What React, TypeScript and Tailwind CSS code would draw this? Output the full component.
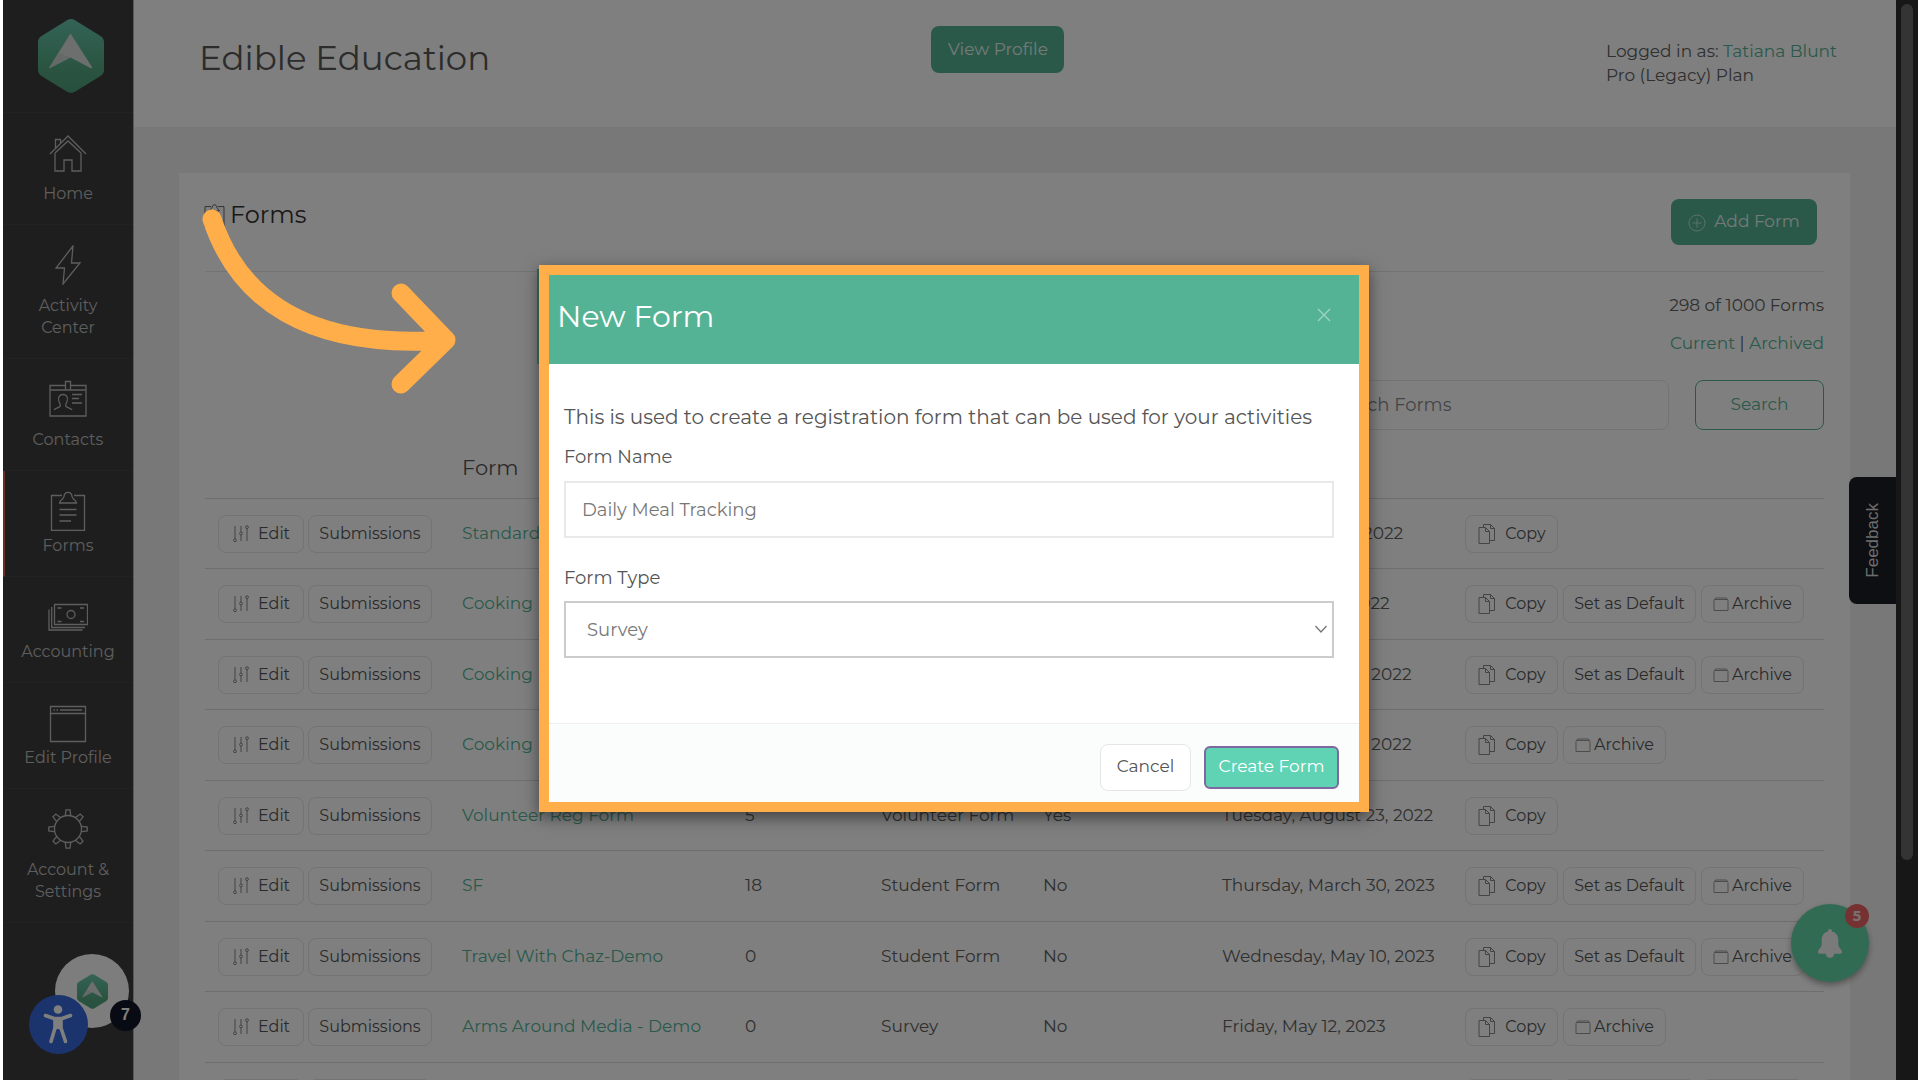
import React from 'react';

type IconProps = { className?: string };

function Svg({ className, children, box = 40, stroke = 1.3 }: IconProps & { children: React.ReactNode; box?: number; stroke?: number }) {
  return (
    <svg className={className} viewBox={`0 0 ${box} ${box}`} fill="none" stroke="currentColor" strokeWidth={stroke} aria-hidden="true">
      {children}
    </svg>
  );
}

const HomeIcon = ({ className }: IconProps) => (
  <Svg className={className}>
    <path d="M2 21 20 3l18 18M7 20v18h9V27h8v11h9V20M7 20 20 8l13 12M7.500 15.500V6.500h5v4" />
  </Svg>
);
const BoltIcon = ({ className }: IconProps) => (
  <Svg className={className}>
    <path d="M25 1 8 23h8.500L15 39l17-21h-8.500z" />
  </Svg>
);
const ContactIcon = ({ className }: IconProps) => (
  <Svg className={className}>
    <path d="M17.500 6.500H2v30.500h36V6.500H22.500M2 11h15.500M22.500 11H38M17.500 2.500h5V11h-5zM24 15.500h10M24 19.500h7M24 24h10M6 31c1-2 4-2 6-3.500.8-1 0-3-1-5-1.500-5 1-7 4-7s5.500 2 4 7c-1 2-1.800 4-1 5 2 1.500 5 1.500 6 3.500" />
  </Svg>
);
const FormsIcon = ({ className }: IconProps) => (
  <Svg className={className}>
    <path d="M14 4.500H3.500V39.500h33V4.500H26M11.500 12h17c-.5-3.500-4-3.500-4.500-6.500-.4-5.500-7.600-5.500-8 0-.5 3-4 3-4.500 6.500zM11.500 18.500h17M11.500 24h17M11.500 30h11.500" />
  </Svg>
);
const CashIcon = ({ className }: IconProps) => (
  <Svg className={className}>
    <path d="M6.500 7.500h33v20h-33zM3.700 10v20.500H37M1 12.500V33h33.500M9.500 11h4M32 11h4M9.500 24.500h4M32 24.500h4" />
    <circle cx="23" cy="17.500" r="4" />
  </Svg>
);
const WindowIcon = ({ className }: IconProps) => (
  <Svg className={className}>
    <path d="M2.500 3.500h35v35h-35zM2.500 10.500h35M12 7h22M5.500 7h1.500M8.500 7H10" />
  </Svg>
);
const GearIcon = ({ className }: IconProps) => (
  <Svg className={className}>
    <circle cx="20" cy="20" r="13.500" />
    {[0, 45, 90, 135, 180, 225, 270, 315].map((a) => (
      <path key={a} d="M17.300 6.500 18 .8h4l.7 5.700" transform={`rotate(${a} 20 20)`} />
    ))}
  </Svg>
);
const SlidersIcon = ({ className }: IconProps) => (
  <Svg className={className} box={18} stroke={1}>
    <path d="M3 1v13M9 1v6M9 10v6M15 4v12" />
    <circle cx="3" cy="15.300" r="1.400" />
    <circle cx="9" cy="8.500" r="1.400" />
    <circle cx="15" cy="2.200" r="1.400" />
  </Svg>
);
const CopyIcon = ({ className }: IconProps) => (
  <Svg className={className} box={20} stroke={1}>
    <path d="M2 3.500h6.500l4 4V19.500H2zM8.500 3.500v4h4M6.500 3.500v-3H13.500l4 4V16.500h-5M13.500.5v4h4" />
  </Svg>
);
const ArchiveIcon = ({ className }: IconProps) => (
  <Svg className={className} box={16} stroke={1}>
    <path d="M1 4.500V14.500h14V4.500" />
    <path d="M1 4.500 2.500 2h11L15 4.500M2 3.500h12" />
  </Svg>
);

function Logo({ className }: IconProps) {
  return (
    <svg className={className} viewBox="0 0 66 74" aria-hidden="true">
      <defs>
        <linearGradient id="hex" x1="0" y1="0" x2="0" y2="1">
          <stop offset="0" stopColor="#68c6ad" />
          <stop offset=".45" stopColor="#5ab390" />
          <stop offset=".7" stopColor="#54a881" />
          <stop offset="1" stopColor="#4f9f7c" />
        </linearGradient>
      </defs>
      <path fill="url(#hex)" d="M29 1.200Q33-1 37 1.200L62.500 17Q66 19.500 66 23V51Q66 54.500 62.500 57L37 72.800Q33 75 29 72.800L3.500 57Q0 54.500 0 51V23Q0 19.500 3.500 17z" />
      <path fill="#d9dedd" d="M32.500 14.500 54 48Q55 50 52.500 49L32.500 38.500 12 49Q10.500 50 11.500 48z" />
      <path fill="#c2cac8" d="M32.500 38.500 12 49Q10.500 50 11.500 48L21 34z" opacity=".6" />
    </svg>
  );
}

const nav = [
  { label: 'Home', icon: HomeIcon, tall: true },
  { label: 'Activity Center', icon: BoltIcon, tall: true },
  { label: 'Contacts', icon: ContactIcon, tall: true },
  { label: 'Forms', icon: FormsIcon, active: true },
  { label: 'Accounting', icon: CashIcon },
  { label: 'Edit Profile', icon: WindowIcon },
  { label: 'Account & Settings', icon: GearIcon, tall: true },
];

type Row = { form: string; count?: string; type?: string; flag?: string; date: string; actions: string[] };
const rows: Row[] = [
  { form: 'Standard', date: 'Monday, June 6, 2022', actions: ['copy'] },
  { form: 'Cooking', date: 'Friday, April 15, 2022', actions: ['copy', 'default', 'archive'] },
  { form: 'Cooking', date: 'Tuesday, June 14, 2022', actions: ['copy', 'default', 'archive'] },
  { form: 'Cooking', date: 'Tuesday, June 14, 2022', actions: ['copy', 'archive'] },
  { form: 'Volunteer Reg Form', count: '5', type: 'Volunteer Form', flag: 'Yes', date: 'Tuesday, August 23, 2022', actions: ['copy'] },
  { form: 'SF', count: '18', type: 'Student Form', flag: 'No', date: 'Thursday, March 30, 2023', actions: ['copy', 'default', 'archive'] },
  { form: 'Travel With Chaz-Demo', count: '0', type: 'Student Form', flag: 'No', date: 'Wednesday, May 10, 2023', actions: ['copy', 'default', 'archive'] },
  { form: 'Arms Around Media - Demo', count: '0', type: 'Survey', flag: 'No', date: 'Friday, May 12, 2023', actions: ['copy', 'archive'] },
  { form: '', date: '', actions: ['copy', 'default', 'archive'] },
];

const small = 'flex h-[38px] shrink-0 items-center justify-center rounded-lg border border-[#e6e6e6] bg-white text-base text-[#555] whitespace-nowrap';

function Actions({ list }: { list: string[] }) {
  return (
    <div className="flex gap-[5px]">
      {list.includes('copy') && (
        <button className={`${small} w-[93px] gap-2`}>
          <CopyIcon className="size-5 text-[#888]" />
          Copy
        </button>
      )}
      {list.includes('default') && <button className={`${small} w-[133px]`}>Set as Default</button>}
      {list.includes('archive') && (
        <button className={`${small} w-[103px] gap-[3px]`}>
          <ArchiveIcon className="size-4 text-[#999]" />
          Archive
        </button>
      )}
    </div>
  );
}

function Sidebar() {
  return (
    <nav className="w-[131px] shrink-0 border-r border-[#b0b0b0] bg-[#3c3c3c] text-[#bcbcbc]">
      <a href="#dashboard" aria-label="Dashboard" className="flex h-[113px] justify-center border-b border-[#444] pt-[19px] pl-1.5">
        <Logo className="h-[74px] w-[66px]" />
      </a>
      {nav.map(({ label, icon: Icon, tall, active }) => (
        <a
          key={label}
          href={`#${label}`}
          className={`flex flex-col items-center border-b border-b-[#444] pt-5 pb-[19px] text-center text-base leading-[22px] ${tall ? 'gap-2.5' : 'gap-1'} ${active ? 'border-l-2 border-l-[#d65a4c] pr-0.5' : ''}`}
        >
          <Icon className="size-10" />
          <span className={label.length > 12 ? 'w-24' : 'whitespace-nowrap'}>{label}</span>
        </a>
      ))}
    </nav>
  );
}

function Header() {
  return (
    <header className="flex h-[127px] shrink-0 items-start bg-white pr-[59px] pl-[65px]">
      <h1 className="flex-[732] pt-[34px] text-[34px] leading-[48px] text-[#585858]">Edible Education</h1>
      <button className="mt-[26px] h-[47px] w-[133px] rounded-lg bg-[#54b394] text-[17px] text-[#e8f4ef]">View Profile</button>
      <div className="flex flex-[772] justify-end pt-[39px] text-[17px] leading-6 text-[#606060]">
        <p className="w-[231px] whitespace-nowrap">
          Logged in as: <a href="#me" className="text-[#54b394]">Tatiana Blunt</a>
          <br />
          Pro (Legacy) Plan
        </p>
      </div>
    </header>
  );
}

function FormsCard() {
  return (
    <section className="min-h-full bg-white px-[26px] text-[#606060]">
      <div className="flex h-[99px] items-start justify-between border-b border-[#e6e6e6] pt-[26px] pr-[7px]">
        <h2 className="flex items-center gap-1 text-2xl leading-8 text-[#333]">
          <FormsIcon className="-ml-0.5 size-[23px]" />
          Forms
        </h2>
        <button className="flex h-[46px] w-[146px] items-center justify-center gap-2 rounded-lg bg-[#54b394] text-[17px] text-[#e8f4ef]">
          <Svg className="mt-0.5 size-[18px] text-[#b8dfd2]" box={18} stroke={1}>
            <circle cx="9" cy="9" r="8" />
            <path d="M9 4.500v9M4.500 9h9" />
          </Svg>
          Add Form
        </button>
      </div>
      <div className="flex flex-col items-end pt-5 text-[17px]">
        <p className="leading-[26px]">298 of 1000 Forms</p>
        <p className="mt-3 leading-[26px]">
          <a href="#current" className="text-[#54b394]">Current</a> | <a href="#archived" className="text-[#54b394]">Archived</a>
        </p>
        <form className="mt-6 flex gap-[26px]" onSubmit={(e) => e.preventDefault()}>
          <input aria-label="Search Forms" placeholder="Search Forms" className="h-[50px] w-[360px] rounded-lg border border-[#e6e6e6] px-[18px] text-lg placeholder:text-[#8a8a8a]" />
          <button className="h-[50px] w-[129px] rounded-lg border border-[#54b394] text-[17px] text-[#54b394]">Search</button>
        </form>
      </div>
      <table className="mt-[18px] w-full table-fixed text-left text-[17px] whitespace-nowrap">
        <colgroup>
          <col className="w-[244px]" />
          <col className="w-[283px]" />
          <col className="w-[136px]" />
          <col className="w-[162px]" />
          <col className="w-[179px]" />
          <col className="w-[244px]" />
          <col />
        </colgroup>
        <thead>
          <tr className="h-[50px] text-[21px] text-[#555]">
            <td />
            <th scope="col" className="pb-3.5 pl-[13px] align-bottom font-normal">Form</th>
            <td colSpan={5} />
          </tr>
        </thead>
        <tbody>
          {rows.map((r, i) => (
            <tr key={i} className="h-[70px] border-t border-[#dcdcdc] even:h-[71px]">
              <td className="pt-px pl-[13px]">
                <div className="flex gap-1">
                  <button className={`${small} w-[86px] gap-2`}>
                    <SlidersIcon className="size-[18px] text-[#888]" />
                    Edit
                  </button>
                  <button className={`${small} w-[124px]`}>Submissions</button>
                </div>
              </td>
              <td className="pt-px pl-[13px]"><a href="#form" className="text-[#54b394]">{r.form}</a></td>
              <td className="pt-px pl-[13px]">{r.count}</td>
              <td className="pt-px pl-[13px]">{r.type}</td>
              <td className="pt-px pl-[13px]">{r.flag}</td>
              <td className="pt-px pl-[13px]">{r.date}</td>
              <td className="pt-px pl-3"><Actions list={r.actions} /></td>
            </tr>
          ))}
        </tbody>
      </table>
    </section>
  );
}

function Widgets() {
  return (
    <>
      <button className="absolute top-[477px] right-[22px] flex h-[127px] w-[47px] items-center justify-center rounded-l-lg bg-[#1b1f24] text-white">
        <span className="rotate-180 font-['Liberation_Sans'] text-[17px] leading-5 text-[#dcdcdc] [writing-mode:vertical-rl]">Feedback</span>
      </button>
      <button aria-label="Notifications" className="absolute right-[49px] bottom-[98px] flex size-[78px] items-center justify-center rounded-full bg-[#64d6a9] shadow-[0_3px_6px_rgba(0,0,0,0.35)]">
        <svg className="size-[30px] text-[#f5f5f5]" viewBox="0 0 30 30" fill="currentColor" aria-hidden="true">
          <path d="M15 1a2 2 0 0 1 2 2v.6c4 .9 6.300 4.200 6.300 8.400v4.500c0 3 3.700 5 3.700 7.500 0 1.200-.8 1.800-2 1.800H19a4 4 0 0 1-8 0H5c-1.200 0-2-.6-2-1.800 0-2.500 3.700-4.500 3.700-7.500V12c0-4.200 2.300-7.500 6.300-8.400V3a2 2 0 0 1 2-2z" />
        </svg>
        <span className="absolute top-0 right-0 size-6 rounded-full bg-[#ec6464] text-sm leading-6 font-bold text-[#f0e0e0]">5</span>
      </button>
      <button aria-label="Help center" className="absolute bottom-[52px] left-[55px] flex size-[74px] items-center justify-center rounded-full bg-[#fafafa]">
        <Logo className="h-[35px] w-[31px]" />
        <span className="absolute right-[-12px] bottom-[-3px] size-[31px] rounded-full bg-[#101528] font-['Liberation_Sans'] text-base leading-[30px] font-bold text-white">7</span>
      </button>
      <button aria-label="Accessibility" className="absolute bottom-[26px] left-[29px] size-[59px] rounded-full bg-[#3668dc] text-white">
        <svg viewBox="0 0 59 59" fill="currentColor" stroke="currentColor" strokeLinecap="round" strokeLinejoin="round" aria-hidden="true">
          <circle cx="29" cy="14.500" r="4.300" stroke="none" />
          <path d="M16.500 20.500 25 23.500h8l8.500-3" fill="none" stroke="currentColor" strokeWidth="3.600" />
          <path d="M26 24h6v9l4.500 13.500M26 24v9l-4 13.500M26 33l3-1 3 1" fill="none" strokeWidth="3.600" />
          <path d="M25 23h8v11h-8z" stroke="none" />
        </svg>
      </button>
    </>
  );
}

function NewFormDialog() {
  return (
    <div role="dialog" aria-modal="true" aria-labelledby="dlg-title" className="relative h-fit w-[830px] border-[10px] border-[#ffae4a] bg-white text-[#555] shadow-[0_5px_15px_rgba(0,0,0,0.5)]">
      <div className="absolute -top-1.5 -left-3 h-[95px] w-0.5 bg-[#2b5a4b]" />
      <div className="flex h-[89px] items-center justify-between bg-[#54b394] pr-7 pb-1.5 pl-2">
        <h2 id="dlg-title" className="text-3xl text-white">New Form</h2>
        <button aria-label="Close" className="mb-1 text-[#9fd5c2]">
          <Svg className="size-3.5" box={14}>
            <path d="m1 1 12 12M13 1 1 13" />
          </Svg>
        </button>
      </div>
      <div className="pt-10 pr-[25px] pb-[65px] pl-[15px]">
        <p className="text-xl leading-[26px] whitespace-nowrap">This is used to create a registration form that can be used for your activities</p>
        <label htmlFor="form-name" className="mt-3.5 block text-lg leading-[26px]">Form Name</label>
        <input id="form-name" defaultValue="Daily Meal Tracking" className="mt-[11px] block h-[57px] w-full border-2 border-[#e9e9e9] px-4 text-lg text-[#777]" />
        <label htmlFor="form-type" className="mt-[27px] block text-lg leading-[26px]">Form Type</label>
        <div className="relative mt-[10px]">
          <select id="form-type" className="block h-[57px] w-full appearance-none border-2 border-[#ccc] bg-white px-[21px] text-lg text-[#777]">
            <option>Survey</option>
          </select>
          <svg className="pointer-events-none absolute top-6 right-[7px] h-2 w-3 text-[#777]" viewBox="0 0 12 8" fill="none" stroke="currentColor" strokeWidth="1.300" aria-hidden="true">
            <path d="m.5 1 5.500 6 5.500-6" />
          </svg>
        </div>
      </div>
      <div className="flex h-[79px] items-center justify-end gap-[13px] border-t border-[#eee] bg-[#fbfcfc] pt-2 pr-5">
        <button className="h-[47px] w-[91px] rounded-lg border border-[#e6e6e6] bg-white text-[17px]">Cancel</button>
        <button className="h-[43px] w-[135px] rounded-md border-2 border-[#7d68a0] bg-[#60d3b4] text-[17px] whitespace-nowrap text-white">Create Form</button>
      </div>
    </div>
  );
}

export default function App() {
  return (
    <div className="relative flex h-screen overflow-hidden border-r-2 border-l-[3px] border-white bg-[#f1f1f1] font-['Montserrat','Inter',sans-serif]">
      <div className="flex min-w-0 flex-1">
        <Sidebar />
        <div className="flex min-w-0 flex-1 flex-col">
          <Header />
          <main className="min-h-0 flex-1 overflow-hidden pt-[46px] pr-[46px] pl-[45px]">
            <FormsCard />
          </main>
        </div>
        <div className="flex w-[22px] shrink-0 justify-center bg-[#2e2e2e] pt-1">
          <div className="h-[856px] w-3 rounded-full bg-[#686868]" />
        </div>
      </div>
      <div className="absolute inset-0 -left-[3px]">
        <Widgets />
      </div>
      <div className="absolute inset-0 flex items-start justify-center bg-black/50 pt-[265px] pr-[13px]">
        <NewFormDialog />
      </div>
      <svg className="pointer-events-none absolute top-[205px] left-[197px] h-[200px] w-[270px]" viewBox="200 205 270 200" fill="none" stroke="#ffae4a" strokeWidth="19" strokeLinecap="round" strokeLinejoin="round" aria-hidden="true">
        <path d="M212 219C238 298 306 350 446 340M401 293l45 47-45 44" />
      </svg>
    </div>
  );
}
